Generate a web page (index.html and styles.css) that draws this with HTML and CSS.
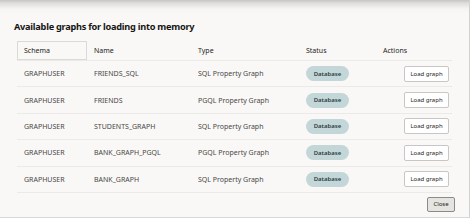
FILE: index.html
```html
<!DOCTYPE html>
<html>
<head>
<meta charset="utf-8">
<link rel="stylesheet" href="styles.css">
</head>
<body>
<div class="dialog">
  <h1 class="title">Available graphs for loading into memory</h1>
  <div class="table">
    <div class="row head">
      <div class="cell focus">Schema</div>
      <div class="cell">Name</div>
      <div class="cell">Type</div>
      <div class="cell">Status</div>
      <div class="cell">Actions</div>
    </div>
    <div class="row">
      <div class="cell">GRAPHUSER</div>
      <div class="cell">FRIENDS_SQL</div>
      <div class="cell">SQL Property Graph</div>
      <div class="cell"><span class="pill">Database</span></div>
      <div class="cell act"><button class="btn">Load graph</button></div>
    </div>
    <div class="row">
      <div class="cell">GRAPHUSER</div>
      <div class="cell">FRIENDS</div>
      <div class="cell">PGQL Property Graph</div>
      <div class="cell"><span class="pill">Database</span></div>
      <div class="cell act"><button class="btn">Load graph</button></div>
    </div>
    <div class="row">
      <div class="cell">GRAPHUSER</div>
      <div class="cell">STUDENTS_GRAPH</div>
      <div class="cell">SQL Property Graph</div>
      <div class="cell"><span class="pill">Database</span></div>
      <div class="cell act"><button class="btn">Load graph</button></div>
    </div>
    <div class="row">
      <div class="cell">GRAPHUSER</div>
      <div class="cell">BANK_GRAPH_PGQL</div>
      <div class="cell">PGQL Property Graph</div>
      <div class="cell"><span class="pill">Database</span></div>
      <div class="cell act"><button class="btn">Load graph</button></div>
    </div>
    <div class="row">
      <div class="cell">GRAPHUSER</div>
      <div class="cell">BANK_GRAPH</div>
      <div class="cell">SQL Property Graph</div>
      <div class="cell"><span class="pill">Database</span></div>
      <div class="cell act"><button class="btn">Load graph</button></div>
    </div>
  </div>
  <div class="footer">
    <button class="close">Close</button>
  </div>
</div>
</body>
</html>
```

FILE: styles.css
```css
* { box-sizing: border-box; }
html, body {
  margin: 0;
  padding: 0;
  background: #ffffff;
  font-family: "Noto Sans", "Open Sans", sans-serif;
}
.dialog {
  width: 470px;
  height: 218px;
  background: linear-gradient(#c4c4c4 0px, #dedddb 3px, #f6f5f3 9px, #f9f8f6 14px) top/100% 14px no-repeat, #f9f8f6;
  border-right: 1px solid #d2d2d2;
  border-bottom: 1px solid #d8d8d8;
  padding: 20px 14px 0 14px;
  display: flex;
  flex-direction: column;
}
.title {
  margin: 0;
  font-size: 9.2px;
  line-height: 14px;
  font-weight: 700;
  color: #161513;
  letter-spacing: -0.25px;
}
.table {
  margin: 7px 0 0 3px;
  width: 435px;
}
.row {
  display: grid;
  grid-template-columns: 70px 104px 108px 77px 76px;
  height: 26.4px;
  border-bottom: 1px solid #ebeae8;
  align-items: center;
  font-size: 7px;
  color: #4a4846;
}
.row.head {
  height: 20px;
  color: #1e1d1c;
}
.cell {
  padding-left: 7px;
  height: 100%;
  display: flex;
  align-items: center;
  white-space: nowrap;
}
.cell.focus {
  border: 1px solid #dcdad7;
  padding-left: 6px;
}
.pill {
  display: inline-flex;
  align-items: center;
  justify-content: center;
  width: 43px;
  height: 15px;
  border-radius: 8px;
  background: #c3d7d9;
  color: #2b3a3d;
  font-size: 6px;
  font-weight: 600;
}
.cell.act {
  justify-content: flex-end;
  padding-right: 3px;
}
.btn {
  width: 45px;
  height: 16px;
  padding: 0;
  background: #ffffff;
  border: 1px solid #c8c7c5;
  border-radius: 2px;
  font-family: inherit;
  font-size: 6px;
  color: #1e1d1c;
}
.footer {
  display: flex;
  justify-content: flex-end;
  margin-top: 4px;
}
.close {
  width: 28px;
  height: 15px;
  padding: 0;
  background: #e6e4e1;
  border: 1px solid #8c8a88;
  border-radius: 2px;
  font-family: inherit;
  font-size: 6px;
  color: #1e1d1c;
}
```
